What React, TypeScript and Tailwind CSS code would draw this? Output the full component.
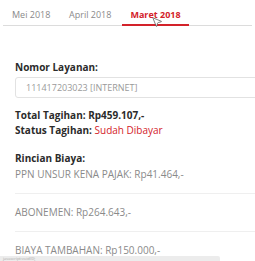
import { MousePointer2 } from "lucide-react";

const rincian = [
  "PPN UNSUR KENA PAJAK: Rp41.464,-",
  "ABONEMEN: Rp264.643,-",
  "BIAYA TAMBAHAN: Rp150.000,-",
];

const App = () => {
  return (
    <div className="w-[255px] h-[261px] overflow-hidden bg-white relative font-['Open_Sans',sans-serif] text-[10px]">
      {/* Tabs */}
      <div className="flex mx-[3px] border-b border-[#dcdcdc] pl-[9px] h-[26px] text-[9px]">
        <div className="w-[57px] pt-[8px] text-[#8a8a8a]">Mei 2018</div>
        <div className="w-[53px] pt-[8px] text-[#8a8a8a]">April 2018</div>
        <div className="w-[67px] pt-[8px] text-center font-bold text-[#d3222a] border-b-2 border-[#d3222a] -mb-px">
          Maret 2018
        </div>
      </div>

      {/* cursor */}
      <MousePointer2
        className="absolute left-[151px] top-[16px]"
        size={12}
        fill="#fff"
        stroke="#555"
        strokeWidth={1.5}
      />

      <div className="pl-[15px] pt-[34px]">
        <div className="font-bold text-[#2b2b2b] leading-[14px]">Nomor Layanan:</div>
        <div className="mt-[3px] w-[260px] h-[21px] border border-[#e2e2e2] rounded-[3px] flex items-center pl-[10px] text-[9px] text-[#9a9a9a]">
          111417203023 [INTERNET]
        </div>

        <div className="mt-[10px] font-bold text-[#2b2b2b] leading-[15px]">
          Total Tagihan: Rp459.107,-
        </div>
        <div className="font-bold text-[#2b2b2b] leading-[15px]">
          Status Tagihan: <span className="font-normal text-[#d3222a]">Sudah Dibayar</span>
        </div>

        <div className="mt-[13px] font-bold text-[#2b2b2b] leading-[14px]">Rincian Biaya:</div>
        <div className="flex flex-col pt-[2px]">
          {rincian.map((item, i) => (
            <div
              key={i}
              className={
                i < rincian.length - 1
                  ? "pb-[12px] border-b border-[#efefef] mb-[11px] text-[#8a8a8a] leading-[14px]"
                  : "text-[#8a8a8a] leading-[14px]"
              }
            >
              {item}
            </div>
          ))}
        </div>
      </div>

      {/* status bar at bottom */}
      <div className="absolute left-0 bottom-0 w-[220px] h-[5px] bg-[#ececec] rounded-tr-[2px] text-[4px] text-[#aaa] pl-[3px] leading-[5px] overflow-hidden">
        javascript:void(0);
      </div>
    </div>
  );
};

export default App;
